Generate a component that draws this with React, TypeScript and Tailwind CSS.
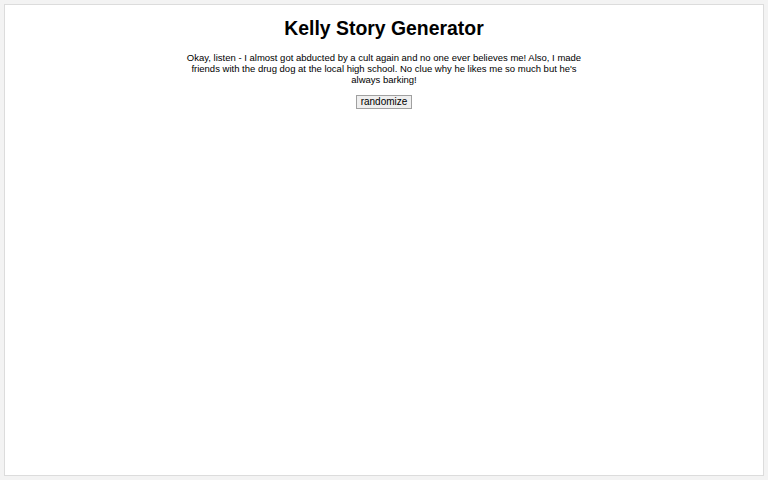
export default function App() {
  return (
    <div
      className="min-h-[480px] bg-[#f3f3f3] p-1"
      style={{ fontFamily: '"Liberation Sans", Arial, sans-serif' }}
    >
      <div className="h-[472px] border border-[#dcdcdc] bg-white flex flex-col items-center">
        <h1 className="mt-[11px] text-[19.4px] leading-[24px] font-bold text-black">
          Kelly Story Generator
        </h1>
        <p className="mt-[12px] w-[400px] text-center text-[9.5px] leading-[11px] text-black">
          Okay, listen - I almost got abducted by a cult again and no one ever believes me! Also, I made
          friends with the drug dog at the local high school. No clue why he likes me so much but he's
          always barking!
        </p>
        <button className="mt-[10px] h-[14px] px-[4px] border border-[#a0a0a0] bg-[#efefef] text-[10px] leading-[12px] text-black">
          randomize
        </button>
      </div>
    </div>
  );
}
